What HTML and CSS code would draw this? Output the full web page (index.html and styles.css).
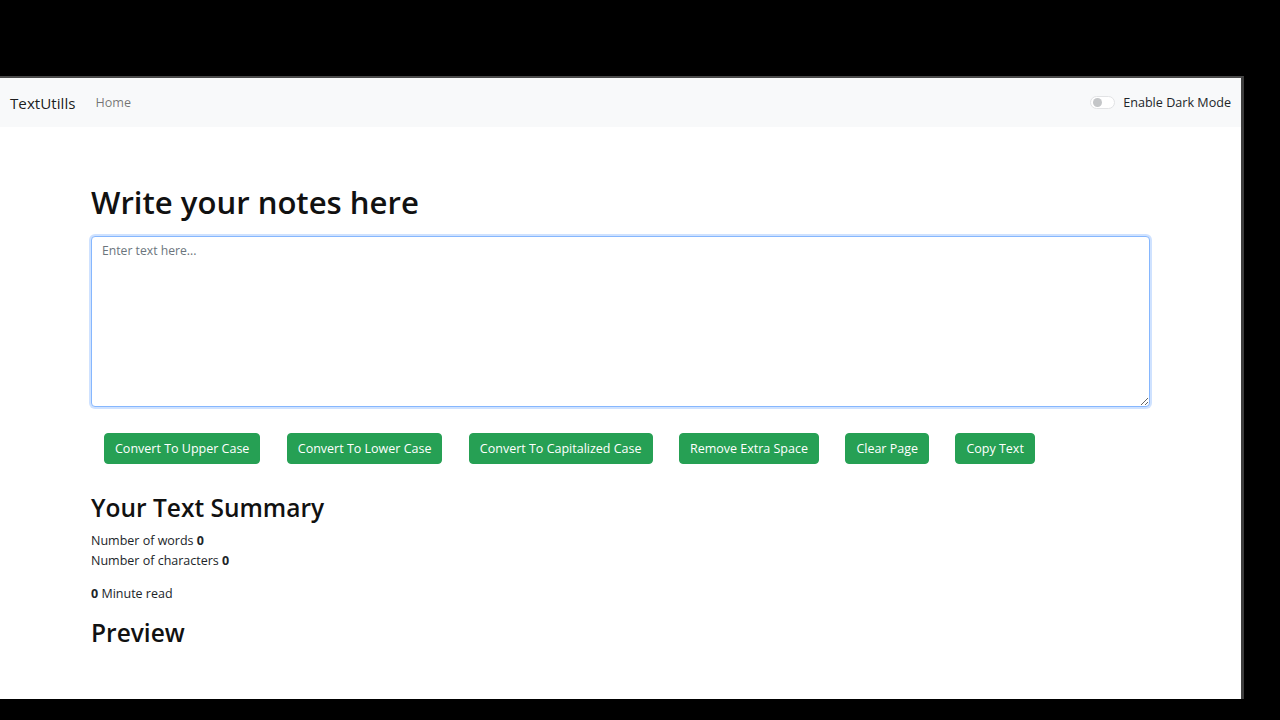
FILE: index.html
```html
<!DOCTYPE html>
<html lang="en">
<head>
<meta charset="utf-8">
<title>TextUtills</title>
<link rel="stylesheet" href="styles.css">
</head>
<body>
<div class="frame">
  <nav class="navbar">
    <a class="brand" href="#">TextUtills</a>
    <a class="nav-link" href="#">Home</a>
    <div class="switch-wrap">
      <span class="switch"><span class="knob"></span></span>
      <label class="switch-label">Enable Dark Mode</label>
    </div>
  </nav>
  <main class="container">
    <h1 class="title">Write your notes here</h1>
    <textarea class="notes" placeholder="Enter text here..."></textarea>
    <div class="actions">
      <button class="btn">Convert To Upper Case</button>
      <button class="btn">Convert To Lower Case</button>
      <button class="btn">Convert To Capitalized Case</button>
      <button class="btn">Remove Extra Space</button>
      <button class="btn">Clear Page</button>
      <button class="btn">Copy Text</button>
    </div>
    <h2 class="section">Your Text Summary</h2>
    <p class="stat">Number of words <b>0</b><br>Number of characters <b>0</b></p>
    <p class="stat"><b>0</b> Minute read</p>
    <h2 class="section">Preview</h2>
  </main>
</div>
</body>
</html>
```

FILE: styles.css
```css
* { box-sizing: border-box; }
body {
  margin: 0;
  background: #000;
  font-family: "Open Sans", "Noto Sans", sans-serif;
  color: #212529;
  height: 720px;
  overflow: hidden;
}
.frame {
  margin-top: 76px;
  width: 1244px;
  height: 623px;
  background: #fff;
  border-top: 2px solid #4a4a4a;
  border-right: 3px solid #3e3e3e;
  overflow: hidden;
}
.navbar {
  height: 49px;
  background: #f8f9fa;
  display: flex;
  align-items: center;
  padding: 0 10px;
}
.brand {
  font-size: 15.2px;
  color: rgba(0,0,0,.9);
  text-decoration: none;
}
.nav-link {
  margin-left: 20px;
  font-size: 12.6px;
  color: rgba(0,0,0,.55);
  text-decoration: none;
}
.switch-wrap {
  margin-left: auto;
  display: flex;
  align-items: center;
  gap: 8px;
}
.switch {
  width: 25px;
  height: 13px;
  border: 1px solid #e2e3e5;
  border-radius: 7px;
  background: #fff;
  display: flex;
  align-items: center;
  padding-left: 2px;
}
.knob {
  width: 9px;
  height: 9px;
  border-radius: 50%;
  background: #c4c6c8;
}
.switch-label {
  font-size: 12.6px;
  color: #212529;
}
.container {
  padding: 56px 0 0 91px;
  width: 1151px;
}
.title {
  margin: 0 0 15px;
  font-size: 31.1px;
  line-height: 38px;
  font-weight: 600;
  color: #111;
}
.notes {
  display: block;
  width: 1059px;
  height: 171px;
  border: 1px solid #86b7fe;
  border-radius: 4px;
  box-shadow: 0 0 0 2px rgba(13,110,253,.2);
  padding: 5px 10px;
  font-family: inherit;
  font-size: 12.2px;
  line-height: 1.5;
  color: #212529;
  outline: none;
}
.notes::placeholder { color: #6c757d; }
.actions {
  display: flex;
  margin: 26px 0 0 13px;
  gap: 26.4px;
}
.btn {
  background: #26a054;
  color: #fff;
  border: 1px solid #26a054;
  border-radius: 4px;
  font-family: inherit;
  font-size: 12.5px;
  line-height: 19px;
  padding: 5px 10px;
  cursor: pointer;
}
.section {
  margin: 29px 0 8px;
  font-size: 24.5px;
  line-height: 30px;
  font-weight: 600;
  color: #111;
}
.stat {
  margin: 0 0 13px;
  font-size: 12.5px;
  line-height: 20px;
}
.stat + .section { margin-top: 14px; }
```
